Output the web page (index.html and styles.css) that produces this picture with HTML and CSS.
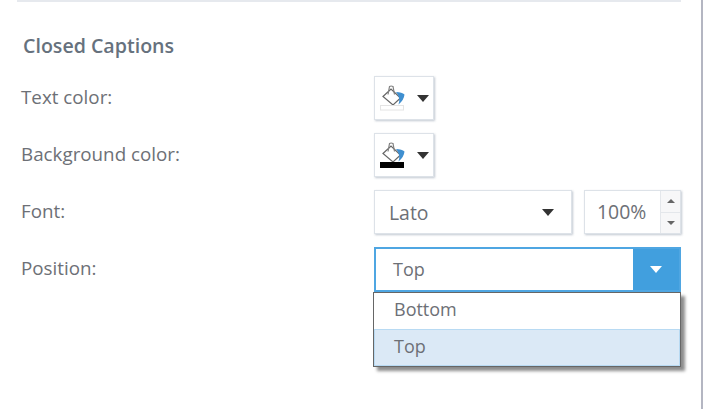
FILE: index.html
```html
<!DOCTYPE html>
<html lang="en">
<head>
<meta charset="UTF-8">
<title>Closed Captions</title>
<link rel="stylesheet" href="styles.css">
</head>
<body>
<div class="panel">
    <h2 class="title">Closed Captions</h2>

    <div class="row">
        <label class="label">Text color:</label>
        <button class="color-btn">
            <svg class="bucket" width="26" height="26" viewBox="0 0 26 26">
                <path d="M3 11.5 L11 4 L20.5 13 L13 20 Z" fill="#fff" stroke="#666" stroke-width="1.2"/>
                <path d="M8 9.5 L9.5 1.5 Q11 0.5 13 1.5 L14.5 9.5" fill="none" stroke="#808080" stroke-width="1.2"/>
                <path d="M16 7 Q22 7 24.5 9.5 Q24 15 18.5 19.5 Q21 13 16 7 Z" fill="#3f8fd0"/>
                <rect x="0.5" y="20.5" width="23" height="4.5" fill="#fff" stroke="#e4e4e4"/>
            </svg>
            <span class="caret"></span>
        </button>
    </div>

    <div class="row">
        <label class="label">Background color:</label>
        <button class="color-btn">
            <svg class="bucket" width="26" height="26" viewBox="0 0 26 26">
                <path d="M3 11.5 L11 4 L20.5 13 L13 20 Z" fill="#fff" stroke="#666" stroke-width="1.2"/>
                <path d="M8 9.5 L9.5 1.5 Q11 0.5 13 1.5 L14.5 9.5" fill="none" stroke="#808080" stroke-width="1.2"/>
                <path d="M16 7 Q22 7 24.5 9.5 Q24 15 18.5 19.5 Q21 13 16 7 Z" fill="#3f8fd0"/>
                <rect x="0" y="20" width="24" height="6" fill="#000"/>
            </svg>
            <span class="caret"></span>
        </button>
    </div>

    <div class="row">
        <label class="label">Font:</label>
        <div class="font-controls">
            <div class="select">
                <span>Lato</span>
                <span class="caret"></span>
            </div>
            <div class="spinner">
                <span class="spinner-value">100%</span>
                <div class="spinner-arrows">
                    <span class="spin-btn"><span class="tri-up"></span></span>
                    <span class="spin-btn"><span class="tri-down"></span></span>
                </div>
            </div>
        </div>
    </div>

    <div class="row">
        <label class="label">Position:</label>
        <div class="combo">
            <div class="combo-box">
                <span class="combo-value">Top</span>
                <span class="combo-arrow"><span class="caret caret-white"></span></span>
            </div>
            <ul class="menu">
                <li class="menu-item">Bottom</li>
                <li class="menu-item selected">Top</li>
            </ul>
        </div>
    </div>
</div>
</body>
</html>
```

FILE: styles.css
```css
html, body {
    height: 100%;
}

body {
    margin: 0;
    background-color: #ffffff;
    font-family: "Open Sans", "Noto Sans", sans-serif;
    font-size: 18px;
    color: #6d7076;
    overflow: hidden;
}

.panel {
    box-sizing: border-box;
    width: 703px;
    height: 409px;
    padding: 0 20px 0 17px;
    border-right: 2px solid #b4b6c2;
}

.title {
    margin: 0;
    padding: 30px 0 16px 6px;
    border-top: 2px solid #e6e9ee;
    font-size: 19.6px;
    line-height: 28px;
    font-weight: 600;
    color: #66717d;
}

.row {
    display: flex;
    height: 44px;
    margin-bottom: 13px;
}

.label {
    width: 353px;
    padding-left: 4px;
    font-size: 18.8px;
    line-height: 42px;
    flex-shrink: 0;
}

.color-btn {
    display: flex;
    align-items: center;
    width: 60px;
    height: 44px;
    padding: 0 0 0 5px;
    background: #fff;
    border: 1px solid #dde2e8;
    box-shadow: 1px 1px 2px rgba(120, 135, 155, 0.45);
}

.bucket {
    flex-shrink: 0;
}

.caret {
    display: inline-block;
    width: 0;
    height: 0;
    border-left: 6px solid transparent;
    border-right: 6px solid transparent;
    border-top: 7px solid #333;
}

.color-btn .caret {
    margin-left: 11px;
}

.font-controls {
    display: flex;
    gap: 12px;
}

.select {
    box-sizing: border-box;
    display: flex;
    align-items: center;
    justify-content: space-between;
    width: 198px;
    height: 44px;
    padding: 0 17px 0 14px;
    background: #fff;
    border: 1px solid #dde2e8;
    box-shadow: 1px 1px 2px rgba(120, 135, 155, 0.45);
    font-size: 19.4px;
}

.spinner {
    box-sizing: border-box;
    display: flex;
    width: 97px;
    height: 44px;
    border: 1px solid #dde2e8;
    box-shadow: 1px 1px 2px rgba(120, 135, 155, 0.45);
    font-size: 19.4px;
}

.spinner-value {
    flex: 1;
    padding-left: 12px;
    line-height: 42px;
}

.spinner-arrows {
    display: flex;
    flex-direction: column;
    width: 19px;
    border-left: 1px solid #e4e7eb;
    background: #f7f7f8;
}

.spin-btn {
    flex: 1;
    display: flex;
    align-items: center;
    justify-content: center;
}

.spin-btn + .spin-btn {
    border-top: 1px solid #e4e7eb;
}

.tri-up,
.tri-down {
    width: 0;
    height: 0;
    border-left: 4px solid transparent;
    border-right: 4px solid transparent;
}

.tri-up {
    border-bottom: 4px solid #666;
}

.tri-down {
    border-top: 4px solid #666;
}

.combo {
    position: relative;
    width: 307px;
}

.combo-box {
    box-sizing: border-box;
    display: flex;
    height: 45px;
    border: 2px solid #4fa6e2;
    background: #fff;
}

.combo-value {
    flex: 1;
    padding-left: 17px;
    line-height: 41px;
}

.combo-arrow {
    display: flex;
    align-items: center;
    justify-content: center;
    width: 46px;
    background: #419fde;
}

.caret-white {
    border-top-color: #fff;
}

.menu {
    position: absolute;
    top: 45px;
    left: -1px;
    right: 0;
    margin: 0;
    padding: 0;
    list-style: none;
    background: #fff;
    border: 1px solid #666;
    box-shadow: 4px 4px 3px rgba(0, 0, 0, 0.45);
}

.menu-item {
    box-sizing: border-box;
    height: 36px;
    padding-left: 20px;
    line-height: 33px;
}

.menu-item.selected {
    height: 37px;
    background: #dbe9f6;
    border: 1px solid #b8daf3;
    padding-left: 19px;
    line-height: 32px;
}
```
